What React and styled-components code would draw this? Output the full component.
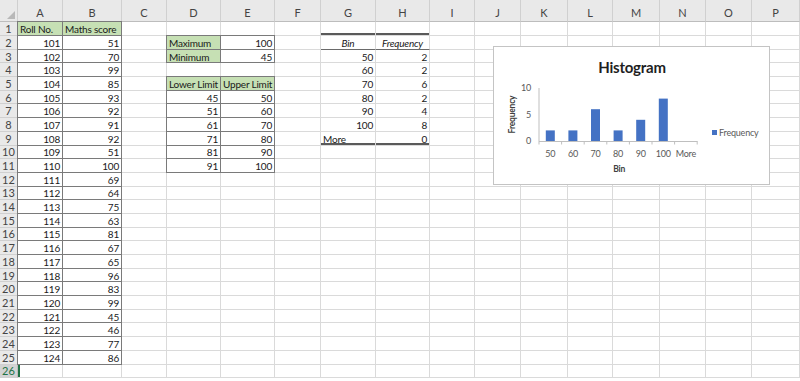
import React from 'react';
import styled, { createGlobalStyle, css } from 'styled-components';

const GlobalStyle = createGlobalStyle`
  html, body {
    margin: 0;
    padding: 0;
    background: #ffffff;
    overflow: hidden;
  }
  body {
    font-family: Lato, "Liberation Sans", sans-serif;
  }
`;

const columns = [
  { key: 'A', width: 45 },
  { key: 'B', width: 59 },
  { key: 'C', width: 45 },
  { key: 'D', width: 54 },
  { key: 'E', width: 54 },
  { key: 'F', width: 46 },
  { key: 'G', width: 55 },
  { key: 'H', width: 54 },
  { key: 'I', width: 45 },
  { key: 'J', width: 46 },
  { key: 'K', width: 47 },
  { key: 'L', width: 45 },
  { key: 'M', width: 47 },
  { key: 'N', width: 46 },
  { key: 'O', width: 46 },
  { key: 'P', width: 48 },
];

const ROW_COUNT = 26;
const ACTIVE_ROW = 26;

const scores = [51, 70, 99, 85, 93, 92, 91, 92, 51, 100, 69, 64, 75, 63, 81, 67, 65, 96, 83, 99, 45, 46, 77, 86];
const limits = [[45, 50], [51, 60], [61, 70], [71, 80], [81, 90], [91, 100]];
const histogram = [
  { bin: '50', freq: 2 },
  { bin: '60', freq: 2 },
  { bin: '70', freq: 6 },
  { bin: '80', freq: 2 },
  { bin: '90', freq: 4 },
  { bin: '100', freq: 8 },
  { bin: 'More', freq: 0 },
];

const cells = {};
const put = (ref, value, opts = {}) => {
  cells[ref] = { value, align: typeof value === 'number' ? 'right' : 'left', ...opts };
};

put('A1', 'Roll No.', { green: true, box: true });
put('B1', 'Maths score', { green: true, box: true });
scores.forEach((s, i) => {
  put(`A${i + 2}`, 101 + i, { box: true });
  put(`B${i + 2}`, s, { box: true });
});

put('D2', 'Maximum', { green: true, box: true });
put('E2', 100, { box: true });
put('D3', 'Minimum', { green: true, box: true });
put('E3', 45, { box: true });

put('D5', 'Lower Limit', { green: true, box: true });
put('E5', 'Upper Limit', { green: true, box: true });
limits.forEach(([lo, hi], i) => {
  put(`D${i + 6}`, lo, { box: true });
  put(`E${i + 6}`, hi, { box: true });
});

// histogram output table: heavy rule above the header and below the last row
cells.G1 = { value: '', rule: true };
cells.H1 = { value: '', rule: true };
put('G2', 'Bin', { italic: true, align: 'center', underline: true });
put('H2', 'Frequency', { italic: true, align: 'center', underline: true });
histogram.forEach((h, i) => {
  const last = i === histogram.length - 1;
  const bin = h.bin === 'More' ? 'More' : Number(h.bin);
  put(`G${i + 3}`, bin, { rule: last });
  put(`H${i + 3}`, h.freq, { rule: last });
});

const Sheet = styled.div`
  position: relative;
  display: grid;
  grid-template-columns: 18px ${columns.map((c) => `${c.width}px`).join(' ')};
  grid-template-rows: 22px 14px repeat(${ROW_COUNT - 1}, 13.7px);
  width: 800px;
  height: 381px;
  overflow: hidden;
  font-size: 10px;
  letter-spacing: -0.2px;
  color: #1a1a1a;
`;

const Corner = styled.div`
  position: relative;
  background: #e9e9e9;
  border-right: 1px solid #cfcfcf;
  border-bottom: 1px solid #bdbdbd;

  &::after {
    content: '';
    position: absolute;
    right: 2px;
    bottom: 2px;
    width: 0;
    height: 0;
    border-left: 8px solid transparent;
    border-bottom: 8px solid #b8b8b8;
  }
`;

const ColHeader = styled.div`
  display: flex;
  align-items: center;
  justify-content: center;
  padding-top: 3px;
  background: #e9e9e9;
  border-right: 1px solid #d0d0d0;
  border-bottom: 1px solid #bdbdbd;
  color: #444;
  font-size: 11px;
  letter-spacing: 0;
`;

const RowHeader = styled.div`
  display: flex;
  align-items: center;
  justify-content: center;
  background: ${(p) => (p.$active ? '#d3d3d3' : '#e9e9e9')};
  border-right: 1px solid #bdbdbd;
  border-bottom: 1px solid #d0d0d0;
  color: ${(p) => (p.$active ? '#217346' : '#444')};
  font-size: 11px;
  letter-spacing: 0;
`;

const justify = { left: 'flex-start', right: 'flex-end', center: 'center' };

const Cell = styled.div`
  position: relative;
  display: flex;
  align-items: center;
  justify-content: ${(p) => justify[p.$align] || 'flex-start'};
  padding: 1px 2px 0;
  min-width: 0;
  overflow: hidden;
  white-space: nowrap;
  background: ${(p) => (p.$green ? '#c6e0b4' : '#ffffff')};
  border-right: 1px solid #dadada;
  border-bottom: 1px solid ${(p) => (p.$underline ? '#6a6a6a' : '#dadada')};
  font-style: ${(p) => (p.$italic ? 'italic' : 'normal')};

  ${(p) =>
    p.$box &&
    css`
      z-index: 1;
      margin: -1px 0 0 -1px;
      border: 1px solid #7a7a7a;
    `}

  ${(p) =>
    p.$rule &&
    css`
      box-shadow: inset 0 -2px 0 #5a5a5a;
    `}

  ${(p) =>
    p.$active &&
    css`
      box-shadow: inset 2px 0 0 #217346;
    `}
`;

const ChartFrame = styled.div`
  position: absolute;
  left: 493px;
  top: 46px;
  width: 277px;
  height: 139px;
  box-sizing: border-box;
  background: #ffffff;
  border: 1px solid #c4c4c4;
  z-index: 5;
`;

const ChartSvg = styled.svg`
  display: block;
  font-family: Lato, "Liberation Sans", sans-serif;
`;

const HistogramChart = () => {
  const x0 = 45;
  const base = 94;
  const unit = 5.3;
  const cat = 22.6;
  const barW = 9;
  return (
    <ChartFrame>
      <ChartSvg width="275" height="137" viewBox="0 0 275 137">
        <text x="138" y="26" textAnchor="middle" fontSize="15" fontWeight="700" fill="#1f1f1f">
          Histogram
        </text>

        {[0, 5, 10].map((v) => (
          <text key={v} x="37" y={base - v * unit + 3} textAnchor="end" fontSize="9" fill="#595959">
            {v}
          </text>
        ))}
        <text
          x="0"
          y="0"
          transform={`translate(21 ${base - 5 * unit}) rotate(-90)`}
          textAnchor="middle"
          fontSize="8.5"
          fontWeight="700"
          fill="#404040"
        >
          Frequency
        </text>

        {histogram.map((h, i) => (
          <rect
            key={h.bin}
            x={x0 + i * cat + (cat - barW) / 2}
            y={base - h.freq * unit}
            width={barW}
            height={h.freq * unit}
            fill="#4472c4"
          />
        ))}

        <line x1={x0} y1={base - 10 * unit} x2={x0} y2={base} stroke="#bfbfbf" strokeWidth="1" />
        <line x1={x0} y1={base + 0.5} x2={x0 + cat * 7} y2={base + 0.5} stroke="#bfbfbf" strokeWidth="1" />
        {Array.from({ length: 8 }, (_, i) => (
          <line
            key={i}
            x1={x0 + i * cat}
            y1={base}
            x2={x0 + i * cat}
            y2={base + 3.5}
            stroke="#bfbfbf"
            strokeWidth="1"
          />
        ))}

        {histogram.map((h, i) => (
          <text
            key={h.bin}
            x={x0 + i * cat + cat / 2}
            y="110"
            textAnchor="middle"
            fontSize="9"
            fill="#595959"
          >
            {h.bin}
          </text>
        ))}
        <text x={x0 + (cat * 7) / 2 + 1} y="125" textAnchor="middle" fontSize="8.5" fontWeight="700" fill="#404040">
          Bin
        </text>

        <rect x="218" y="83" width="5" height="5" fill="#4472c4" />
        <text x="225" y="88.5" fontSize="9" fill="#595959">
          Frequency
        </text>
      </ChartSvg>
    </ChartFrame>
  );
};

export default function App() {
  const rows = Array.from({ length: ROW_COUNT }, (_, i) => i + 1);
  return (
    <>
      <GlobalStyle />
      <Sheet>
        <Corner />
        {columns.map((c) => (
          <ColHeader key={c.key}>{c.key}</ColHeader>
        ))}
        {rows.map((r) => (
          <React.Fragment key={r}>
            <RowHeader $active={r === ACTIVE_ROW}>{r}</RowHeader>
            {columns.map((c) => {
              const cell = cells[`${c.key}${r}`] || {};
              return (
                <Cell
                  key={c.key}
                  $align={cell.align}
                  $green={cell.green}
                  $box={cell.box}
                  $italic={cell.italic}
                  $underline={cell.underline}
                  $rule={cell.rule}
                  $active={r === ACTIVE_ROW && c.key === 'A'}
                >
                  {cell.value}
                </Cell>
              );
            })}
          </React.Fragment>
        ))}
        <HistogramChart />
      </Sheet>
    </>
  );
}
